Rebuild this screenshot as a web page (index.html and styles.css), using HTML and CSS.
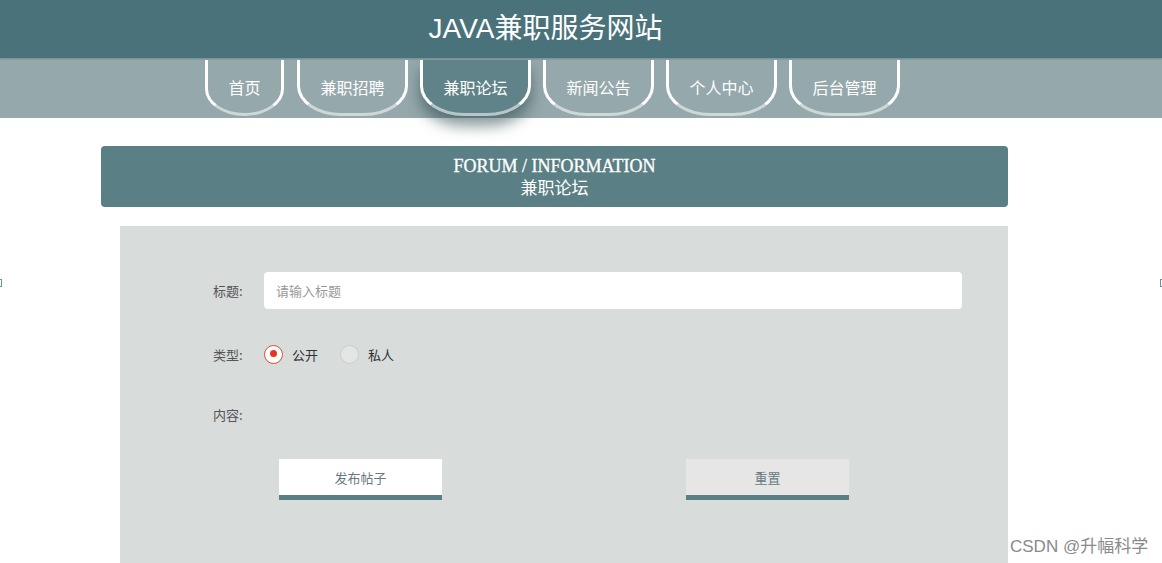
FILE: index.html
```html
<!DOCTYPE html>
<html lang="zh">
<head>
<meta charset="utf-8">
<link rel="stylesheet" href="styles.css">
</head>
<body>
<header class="top">
  <div class="wrap">
    <h1 class="site-title">JAVA兼职服务网站</h1>
  </div>
</header>
<nav class="nav">
  <div class="wrap nav-inner">
    <a class="tab tab-first">首页</a>
    <a class="tab">兼职招聘</a>
    <a class="tab active">兼职论坛</a>
    <a class="tab">新闻公告</a>
    <a class="tab">个人中心</a>
    <a class="tab">后台管理</a>
  </div>
</nav>
<main class="wrap main">
  <div class="banner">
    <div class="banner-en">FORUM / INFORMATION</div>
    <div class="banner-cn">兼职论坛</div>
  </div>
  <section class="panel">
    <div class="row row-title">
      <label class="label">标题:</label>
      <div class="input">请输入标题</div>
    </div>
    <div class="row row-type">
      <label class="label">类型:</label>
      <span class="radio checked"></span><span class="radio-text">公开</span>
      <span class="radio"></span><span class="radio-text">私人</span>
    </div>
    <div class="row row-content">
      <label class="label">内容:</label>
    </div>
    <div class="buttons">
      <button class="btn btn-submit">发布帖子</button>
      <button class="btn btn-reset">重置</button>
    </div>
  </section>
</main>
<span class="edge edge-left"></span>
<span class="edge edge-right"></span>
<div class="watermark">CSDN @升幅科学</div>
</body>
</html>
```
FILE: styles.css
```css
* { box-sizing: border-box; }
html, body { margin: 0; padding: 0; background: #fff; overflow: hidden; }
body {
  font-family: "Noto Sans CJK SC", "Noto Sans", "Liberation Sans", sans-serif;
  width: 1162px;
  height: 563px;
  position: relative;
}
.wrap { width: 907px; margin-left: 101px; }
.top { background: #4a727a; height: 58px; box-shadow: 0 1px 2px rgba(0,0,0,0.2); position: relative; z-index: 2; }
.site-title {
  margin: 0;
  padding-top: 9px;
  padding-right: 18px;
  text-align: center;
  color: #fff;
  font-weight: 400;
  font-size: 28px;
  line-height: 40px;
  font-family: "Liberation Sans", "Noto Sans CJK SC", sans-serif;
}
.nav { background: #95a8ab; height: 60px; position: relative; z-index: 1; }
.nav-inner { display: flex; padding-left: 104px; gap: 12px; height: 60px; }
.tab {
  margin-top: 2px;
  width: 111px;
  height: 56px;
  border: 3px solid #fff;
  border-top: none;
  border-bottom-color: rgba(255,255,255,0.55);
  border-radius: 0 0 44px 44px / 0 0 30px 30px;
  color: #fff;
  font-size: 16px;
  display: flex;
  align-items: center;
  justify-content: center;
  padding-top: 1px;
}
.tab-first { width: 79px; margin-right: 1px; }
.tab.active { background: #5f8388; box-shadow: 0 10px 14px rgba(40,70,75,0.55); }
.main { padding-top: 28px; }
.banner {
  background: #5a7f84;
  height: 61px;
  border-radius: 4px;
  color: #fff;
  text-align: center;
  padding-top: 10px;
}
.banner-en { font-family: "Liberation Serif", serif; font-size: 18px; line-height: 20px; -webkit-text-stroke: 0.3px #fff; }
.banner-cn { font-family: "Noto Sans CJK SC", sans-serif; font-size: 17px; line-height: 22px; }
.panel {
  margin-top: 19px;
  margin-left: 19px;
  width: 888px;
  height: 340px;
  background: #d8dcdb;
  padding-top: 46px;
}
.row { display: flex; align-items: center; }
.label { width: 144px; padding-left: 93px; font-size: 13px; color: #555; }
.input {
  width: 698px;
  height: 37px;
  background: #fff;
  border-radius: 4px;
  font-size: 13px;
  color: #999;
  display: flex;
  align-items: center;
  padding-left: 12px;
}
.row-type { margin-top: 27px; height: 36px; }
.radio {
  width: 19px; height: 19px; border-radius: 50%;
  border: 1px solid #ccc; background: #e3e6e5;
  display: inline-block;
}
.radio.checked { border: 1.5px solid #e0492f; background: #fff; position: relative; }
.radio.checked::after {
  content: ""; position: absolute; left: 4.5px; top: 4.5px;
  width: 7px; height: 7px; border-radius: 50%; background: #e8341e;
}
.radio-text { font-size: 13px; color: #333; margin-left: 9px; margin-right: 22px; }
.row-content { margin-top: 32px; height: 20px; }
.buttons { display: flex; margin-top: 35px; padding-left: 159px; gap: 244px; }
.btn {
  width: 163px; height: 41px;
  border: none; border-bottom: 5px solid #5a7f84;
  font-family: "Noto Sans CJK SC", sans-serif;
  font-size: 13px; color: #667a80;
  padding: 0;
}
.btn-submit { background: #fff; }
.btn-reset { background: #e6e6e6; }
.edge { position: absolute; top: 279px; width: 3px; height: 8px; border: 1px solid #6a8fb0; }
.edge-left { left: -1px; }
.edge-right { right: -1px; }
.watermark {
  position: absolute; left: 1010px; top: 532px;
  font-size: 17px; color: #8a8a8a;
  font-family: "Liberation Sans", "Noto Sans CJK SC", sans-serif;
  text-shadow: 0 0 2px #fff;
}
```
